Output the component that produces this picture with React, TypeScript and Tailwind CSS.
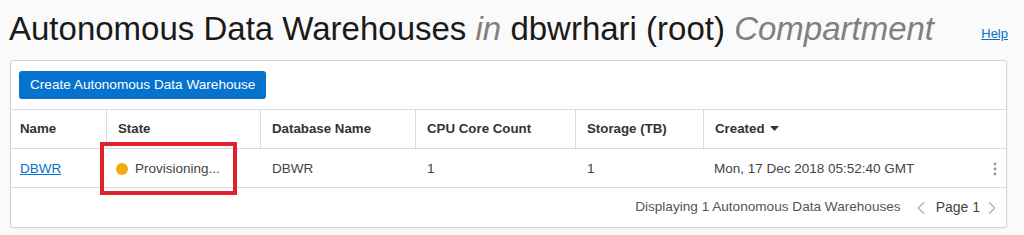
import React from "react";
import { ChevronLeft, ChevronRight } from "lucide-react";

export default function App() {
  const font = { fontFamily: '"Liberation Sans", Arial, sans-serif' };
  const cols = "grid grid-cols-[95px_154px_155px_160px_128px_1fr]";
  return (
    <div className="relative w-[1024px] h-[235px] bg-[#fafafa] overflow-hidden text-[#333]" style={font}>
      <div className="flex items-start justify-between pl-[9px] pr-[16px] pt-[12px]">
        <h1 className="text-[33px] leading-[33px] text-[#1a1a1a] whitespace-nowrap">
          Autonomous Data Warehouses <i className="text-[#808080]">in</i> dbwrhari (root){" "}
          <i className="text-[#808080]">Compartment</i>
        </h1>
        <a href="#" className="mt-[14px] text-[13px] leading-[15px] text-[#0572ce] underline">
          Help
        </a>
      </div>

      <div className="ml-[10px] mt-[15px] w-[997px] border border-[#d4d4d4] rounded-[3px] bg-white shadow-[0_1px_2px_rgba(0,0,0,0.06)]">
        <div className="pl-[8px] pt-[10px] pb-[10px]">
          <button className="h-[28px] px-[11px] rounded-[3px] bg-[#0572ce] text-white text-[13.6px] leading-[28px]">
            Create Autonomous Data Warehouse
          </button>
        </div>

        <div className={`${cols} h-[40px] border-t border-b border-[#dcdcdc] text-[13.3px] font-bold text-[#333]`}>
          <div className="flex items-center pl-[9px]">Name</div>
          <div className="flex items-center pl-[11px] border-l border-[#dcdcdc]">State</div>
          <div className="flex items-center pl-[11px] border-l border-[#dcdcdc]">Database Name</div>
          <div className="flex items-center pl-[11px] border-l border-[#dcdcdc]">CPU Core Count</div>
          <div className="flex items-center pl-[11px] border-l border-[#dcdcdc]">Storage (TB)</div>
          <div className="flex items-center pl-[11px] border-l border-[#dcdcdc] gap-[5px]">
            Created
            <svg width="9" height="6" viewBox="0 0 9 6">
              <path d="M0 0 L9 0 L4.5 5 Z" fill="#333" />
            </svg>
          </div>
        </div>

        <div className={`${cols} h-[39px] border-b border-[#dcdcdc] text-[13.5px] text-[#444]`}>
          <div className="flex items-center pl-[9px] pt-[2px]">
            <a href="#" className="text-[#0572ce] underline">DBWR</a>
          </div>
          <div className="flex items-center pl-[10px] gap-[7px] pt-[2px]">
            <span className="w-[12px] h-[12px] rounded-full bg-[#f5a70f]" />
            Provisioning...
          </div>
          <div className="flex items-center pl-[12px] pt-[2px]">DBWR</div>
          <div className="flex items-center pl-[12px] pt-[2px]">1</div>
          <div className="flex items-center pl-[12px] pt-[2px]">1</div>
          <div className="flex items-center justify-between pl-[11px] pr-[9px] pt-[2px]">
            <span>Mon, 17 Dec 2018 05:52:40 GMT</span>
            <svg width="4" height="14" viewBox="0 0 4 14">
              <circle cx="2" cy="2" r="1.4" fill="#999" />
              <circle cx="2" cy="7" r="1.4" fill="#999" />
              <circle cx="2" cy="12" r="1.4" fill="#999" />
            </svg>
          </div>
        </div>

        <div className="flex h-[39px] items-center justify-end pr-[3px] text-[13.6px] text-[#555]">
          <span>Displaying 1 Autonomous Data Warehouses</span>
          <ChevronLeft className="ml-[9px]" size={22} strokeWidth={1.2} color="#aaa" />
          <span className="ml-[4px] text-[14px] text-[#444]">Page 1</span>
          <ChevronRight className="ml-[1px]" size={22} strokeWidth={1.2} color="#aaa" />
        </div>
      </div>

      <div className="absolute left-[100px] top-[142px] w-[137px] h-[53px] border-[4px] border-[#e3212a]" />
    </div>
  );
}
